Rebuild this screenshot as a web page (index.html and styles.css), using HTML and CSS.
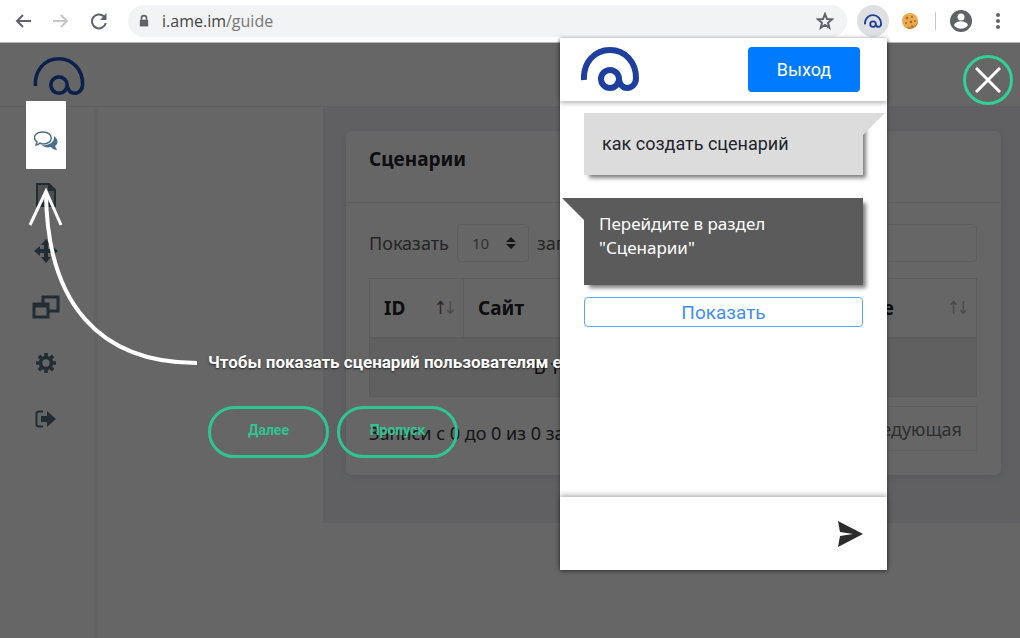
FILE: index.html
```html
<!DOCTYPE html>
<html lang="ru">
<head>
    <meta charset="UTF-8">
    <meta name="viewport" content="width=device-width, initial-scale=1.0">
    <title>Сценарии</title>
    <link rel="stylesheet" href="styles.css">
</head>
<body>

    <!-- Shared logo shape -->
    <svg class="defs" aria-hidden="true">
        <symbol id="logo" viewBox="0 0 58 44">
            <path d="M3 33C2 16 13 3 29 3c15 0 26 12 26 28 0 6-4 10-9 10s-7-4-8-8"/>
            <circle cx="29" cy="32" r="9"/>
        </symbol>
    </svg>

    <!-- Browser toolbar -->
    <div class="toolbar">
        <button class="tool" aria-label="Назад">
            <svg width="18" height="18" viewBox="0 0 18 18" fill="none" stroke="#5f6368" stroke-width="2"><path d="M17 9H3M9 3L3 9l6 6"/></svg>
        </button>
        <button class="tool" aria-label="Вперёд">
            <svg width="18" height="18" viewBox="0 0 18 18" fill="none" stroke="#c4c6c8" stroke-width="2"><path d="M1 9h14M9 3l6 6-6 6"/></svg>
        </button>
        <button class="tool" aria-label="Обновить">
            <svg width="18" height="18" viewBox="0 0 18 18" fill="none" stroke="#5f6368" stroke-width="2"><path d="M14 4.500A7 7 0 1 0 15.800 11"/><path d="M16.500 1v7H10z" fill="#5f6368" stroke="none"/></svg>
        </button>
        <div class="address">
            <svg width="10" height="14" viewBox="0 0 12 15"><path d="M1 6h10v8H1z" fill="#5f6368"/><path d="M3 6V4a3 3 0 0 1 6 0v2" fill="none" stroke="#5f6368" stroke-width="2"/></svg>
            <span class="url">i.ame.im<span class="path">/guide</span></span>
            <svg class="star" width="18" height="18" viewBox="0 0 18 18" fill="none" stroke="#5f6368" stroke-width="2"><path d="M9 2l2 5 5 .4-4 3.400 1.300 5L9 13l-4.300 2.800 1.300-5-4-3.400L7 7z"/></svg>
        </div>
        <button class="extension" aria-label="Ассистент">
            <svg class="logo" width="18" height="14"><use href="#logo"/></svg>
        </button>
        <button class="tool" aria-label="Cookie">
            <svg width="18" height="18" viewBox="0 0 18 18"><circle cx="9" cy="9" r="8" fill="#eba94e"/><path d="M4 15a8 8 0 0 0 13-6c-1 4-6 7-13 6z" fill="#c97f2c"/><g fill="#a8642a"><circle cx="6" cy="6" r="1.300"/><circle cx="11" cy="5" r="1"/><circle cx="5" cy="11" r="1"/><circle cx="10" cy="10" r="1.300"/><circle cx="14" cy="9" r="1"/><circle cx="11" cy="14" r="1"/></g></svg>
        </button>
        <span class="divider"></span>
        <button class="tool profile" aria-label="Профиль">
            <svg width="22" height="22" viewBox="0 0 22 22"><circle cx="11" cy="11" r="11" fill="#5f6368"/><circle cx="11" cy="7" r="3.500" fill="#fff"/><path d="M4 15c2-5 12-5 14 0-3 5-11 5-14 0z" fill="#fff"/></svg>
        </button>
        <button class="tool" aria-label="Меню">
            <svg width="4" height="18" viewBox="0 0 4 18" fill="#5f6368"><circle cx="2" cy="3" r="2"/><circle cx="2" cy="9" r="2"/><circle cx="2" cy="15" r="2"/></svg>
        </button>
    </div>

    <div class="page">
        <div class="header">
            <svg class="logo" width="54" height="40"><use href="#logo"/></svg>
        </div>

        <div class="main">
            <nav class="sidebar">
                <a href="#" class="active" aria-label="Сценарии">
                    <svg width="24" height="20" viewBox="0 0 24 20"><path d="M20 5c5 4 4 8 1 10l2 4c-3 0-5-2-6-3-4 1-7 0-9-2 7 1 13-3 12-9z" fill="#48708a"/><path d="M9 1c11 0 11 12 0 12-2 0-2 0-3-1-1 1-2 2-4 2l1-3C-2 7 1 1 9 1z" fill="#fff" stroke="#48708a" stroke-width="1.500"/></svg>
                </a>
                <a href="#" aria-label="Файлы">
                    <svg width="22" height="24" viewBox="0 0 22 24"><path d="M2 1h12l6 6v16H2z" fill="#c0c6ca" stroke="#557080" stroke-width="2"/><path d="M13 1v7h7M6 19h10v4H6z" fill="#557080"/></svg>
                </a>
                <a href="#" aria-label="Переместить">
                    <svg width="24" height="24" viewBox="0 0 24 24" fill="#557080"><path d="M12 0l5 6h-3v4h4V7l6 5-6 5v-3h-4v4h3l-5 6-5-6h3v-4H6v3l-6-5 6-5v3h4V6H7z"/></svg>
                </a>
                <a href="#" aria-label="Окна">
                    <svg width="28" height="24" viewBox="0 0 28 24" fill="none" stroke="#557080" stroke-width="3"><path d="M11 8V2h15v14h-9M2 9h14v13H2z"/><path d="M2 11h14"/></svg>
                </a>
                <a href="#" aria-label="Настройки">
                    <svg width="20" height="20" viewBox="0 0 22 22" fill="none" stroke="#557080"><circle cx="11" cy="11" r="6" stroke-width="4"/><path d="M11 0v4M11 18v4M0 11h4M18 11h4M3.200 3.200l3 3M15.800 15.800l3 3M3.200 18.800l3-3M15.800 6.200l3-3" stroke-width="4"/></svg>
                </a>
                <a href="#" aria-label="Выйти">
                    <svg width="22" height="18" viewBox="0 0 22 18"><path d="M8 1.500H4Q1.500 1.500 1.500 4v10Q1.500 16.500 4 16.500h4" fill="none" stroke="#557080" stroke-width="2"/><path d="M6 6h6V1l9 8-9 8v-5H6z" fill="#557080"/></svg>
                </a>
            </nav>

            <div class="content">
                <div class="card">
                    <h1>Сценарии</h1>
                    <div class="card-body">
                        <div class="row filters">
                            <label class="length">Показать
                                <span class="select">
                                    <select><option>10</option><option>25</option></select>
                                    <svg width="10" height="14" viewBox="0 0 10 14"><path d="M0 6l5-5 5 5zM0 8l5 5 5-5z" fill="#343a40"/></svg>
                                </span>
                                записей</label>
                            <label class="search">Поиск: <input type="search"></label>
                        </div>
                        <table>
                            <thead>
                                <tr>
                                    <th class="col-id"><span class="th">ID <span class="sort"><b>↑</b>↓</span></span></th>
                                    <th><span class="th">Сайт <span class="sort">↑↓</span></span></th>
                                    <th class="col-name"><span class="th">Название <span class="sort">↑↓</span></span></th>
                                </tr>
                            </thead>
                            <tbody>
                                <tr><td colspan="3">В таблице отсутствуют данные</td></tr>
                            </tbody>
                        </table>
                        <div class="row">
                            <span class="info">Записи с 0 до 0 из 0 записей</span>
                            <div class="pages">
                                <button>Предыдущая</button>
                                <button>Следующая</button>
                            </div>
                        </div>
                    </div>
                </div>
            </div>
        </div>

        <div class="overlay"></div>

        <!-- Guided tour -->
        <svg class="arrow" width="180" height="190" viewBox="0 0 180 190" fill="none" stroke="#fff" stroke-width="4">
            <path d="M177 178C78 178 27 117 26 8"/>
            <path d="M10 40L26 6l15 34" stroke-width="3"/>
        </svg>
        <div class="tour">
            <p>Чтобы показать сценарий пользователям е</p>
            <div class="tour-buttons">
                <button>Далее</button>
                <button>Пропуск</button>
            </div>
        </div>
        <button class="close" aria-label="Закрыть">
            <svg width="26" height="26" viewBox="0 0 26 26" stroke="#fff" stroke-width="3"><path d="M1 1l24 24M25 1L1 25"/></svg>
        </button>
    </div>

    <!-- Extension popup -->
    <div class="popup">
        <div class="popup-header">
            <svg class="logo" width="58" height="44"><use href="#logo"/></svg>
            <button class="logout">Выход</button>
        </div>
        <div class="chat">
            <div class="message user">как создать сценарий</div>
            <div class="message bot">Перейдите в раздел<br>"Сценарии"</div>
            <button class="show">Показать</button>
        </div>
        <div class="popup-footer">
            <input type="text" aria-label="Сообщение">
            <button aria-label="Отправить">
                <svg width="26" height="26" viewBox="0 0 26 26"><path d="M1 0l25 13L1 26l2-11 13-2-13-2z" fill="#2b2b2b"/></svg>
            </button>
        </div>
    </div>

</body>
</html>
```

FILE: styles.css
```css
/* Basic reset */
* {
    margin: 0;
    padding: 0;
    box-sizing: border-box;
}

body {
    display: flex;
    flex-direction: column;
    position: relative;
    min-height: 100vh;
    background: #fff;
    color: #212529;
    font-family: "Noto Sans", sans-serif;
    font-size: 18px;
}

button {
    background: none;
    border: none;
    font-family: inherit;
    cursor: pointer;
}

svg {
    display: block;
    flex-shrink: 0;
}

.defs {
    position: absolute;
    width: 0;
    height: 0;
}

.logo {
    fill: none;
    stroke: #1f3f9e;
    stroke-width: 6px;
}

/* Browser toolbar */
.toolbar {
    display: flex;
    align-items: center;
    height: 43px;
    padding: 0 20px 0 14px;
    border-bottom: 1px solid #b5b5b5;
}

.tool {
    margin-right: 20px;
}

.tool:last-child {
    margin-right: 0;
}

.address {
    display: flex;
    flex: 1;
    align-items: center;
    gap: 13px;
    height: 32px;
    padding: 0 13px 0 11px;
    margin-right: 10px;
    border-radius: 16px;
    background: #f1f3f4;
    font-family: "Open Sans", sans-serif;
    font-size: 16px;
    color: #444;
}

.path {
    color: #777;
}

.star {
    margin-left: auto;
}

.extension {
    display: flex;
    align-items: center;
    justify-content: center;
    width: 32px;
    height: 32px;
    margin-right: 12px;
    border-radius: 50%;
    background: #dfe0e1;
}

.divider {
    width: 1px;
    height: 18px;
    margin-right: 14px;
    margin-left: -4px;
    background: #c8c8c8;
}

.profile {
    margin-right: 24px;
}

/* Page */
.page {
    display: flex;
    flex: 1;
    flex-direction: column;
    position: relative;
}

.header {
    height: 64px;
    padding: 13px 32px;
    border-bottom: 1px solid #ebebeb;
}

.header .logo {
    stroke: #1d52b8;
    stroke-width: 4px;
}

.main {
    display: flex;
    flex: 1;
}

.sidebar {
    display: flex;
    flex-direction: column;
    align-items: center;
    width: 98px;
    padding-right: 2px;
    border-right: 4px solid #f8f8f8;
}

.sidebar a {
    display: flex;
    align-items: center;
    justify-content: center;
    width: 40px;
    height: 56px;
}

.sidebar .active {
    position: relative;
    z-index: 2;
    height: 68px;
    padding-top: 12px;
    margin-top: -6px;
    margin-bottom: -2px;
    background: #fff;
}

.content {
    flex: 1;
    align-self: flex-start;
    margin-left: 225px;
    padding: 24px 19px 48px 23px;
    background: #eff0f5;
}

.card {
    border-radius: 6px;
    background: #fff;
    box-shadow: 0 2px 8px rgba(0, 0, 0, 0.08);
}

.card h1 {
    height: 72px;
    padding: 16px 23px;
    border-bottom: 1px solid #e9e9e9;
    font-size: 19px;
    line-height: 24px;
}

.card-body {
    padding: 21px 24px 24px 23px;
    color: #5a5e62;
}

.row {
    display: flex;
    align-items: center;
    justify-content: space-between;
}

.filters {
    margin-bottom: 16px;
}

.length,
.search {
    display: flex;
    align-items: center;
    gap: 8px;
    line-height: 24px;
}

.select {
    position: relative;
}

.select select {
    width: 72px;
    height: 38px;
    padding: 0 14px;
    appearance: none;
    border: 1px solid #e9e9e9;
    border-radius: 4px;
    background: #fff;
    color: #777b80;
    font-family: inherit;
    font-size: 15px;
}

.select svg {
    position: absolute;
    top: 12px;
    right: 13px;
    pointer-events: none;
}

.search input {
    width: 170px;
    height: 38px;
    border: 1px solid #e9e9e9;
    border-radius: 4px;
    background: #fff;
}

table {
    width: 100%;
    margin-bottom: 9px;
    border-collapse: collapse;
    color: #212529;
    font-size: 19px;
}

th,
td {
    height: 59px;
    padding: 0 10px 0 14px;
    border: 1px solid #e6e6e6;
}

th {
    border-bottom-width: 2px;
}

.th {
    display: flex;
    align-items: center;
    justify-content: space-between;
}

.col-id {
    width: 94px;
}

.col-name {
    width: 192px;
}

.sort {
    color: #bbb;
    font-family: "DejaVu Sans Condensed", sans-serif;
    font-size: 18px;
    font-weight: normal;
    letter-spacing: -4px;
}

.sort b {
    color: #666;
    font-weight: normal;
}

td {
    background: #f0f0f0;
    text-align: center;
}

.info {
    padding-top: 8px;
    color: #33373b;
}

.pages {
    display: flex;
}

.pages button {
    height: 45px;
    padding: 0 14px;
    border: 1px solid #f0f0f0;
    color: #6c757d;
    font-size: 18px;
}

.overlay {
    position: absolute;
    z-index: 1;
    top: 0;
    left: 0;
    width: 100%;
    height: 100%;
    background: rgba(0, 0, 0, 0.6);
}

/* Guided tour */
.arrow {
    position: absolute;
    z-index: 3;
    top: 142px;
    left: 20px;
}

.tour {
    position: absolute;
    z-index: 3;
    top: 307px;
    left: 208px;
    color: #fff;
    font-family: Roboto, sans-serif;
    font-weight: bold;
}

.tour p {
    margin-bottom: 32px;
    font-size: 17px;
    line-height: 24px;
    text-shadow: 0 1px 2px #222;
    white-space: nowrap;
}

.tour-buttons {
    display: flex;
    gap: 8px;
}

.tour button {
    width: 121px;
    height: 52px;
    padding-bottom: 4px;
    border: 3px solid #30c493;
    border-radius: 26px;
    color: #30c493;
    font-size: 14px;
    font-weight: bold;
}

.close {
    display: flex;
    align-items: center;
    justify-content: center;
    position: absolute;
    z-index: 3;
    top: 12px;
    right: 7px;
    width: 50px;
    height: 50px;
    border: 3px solid #30d098;
    border-radius: 50%;
}

/* Extension popup */
.popup {
    display: flex;
    flex-direction: column;
    position: absolute;
    z-index: 4;
    top: 38px;
    right: 133px;
    width: 327px;
    height: 532px;
    background: #fff;
    box-shadow: 0 1px 4px rgba(0, 0, 0, 0.5);
    font-family: Roboto, sans-serif;
    font-size: 18px;
}

.popup-header {
    display: flex;
    justify-content: space-between;
    height: 63px;
    padding: 9px 27px 9px 21px;
    box-shadow: 0 2px 5px rgba(0, 0, 0, 0.3);
}

.logout {
    width: 112px;
    height: 45px;
    border-radius: 4px;
    background: #007bff;
    color: #fff;
    font-size: 18px;
}

.chat {
    flex: 1;
    padding: 12px 24px;
}

.message {
    position: relative;
    margin-bottom: 23px;
    box-shadow: 4px 4px 4px -1px rgba(0, 0, 0, 0.5);
}

.message::after {
    content: "";
    position: absolute;
    top: 0;
    width: 22px;
    height: 22px;
}

.user {
    padding: 19px 18px;
    background: #dcdcdc;
    line-height: 24px;
}

.user::after {
    left: 100%;
    background: #dcdcdc;
    clip-path: polygon(0 0, 100% 0, 0 100%);
}

.bot {
    min-height: 87px;
    padding: 14px 15px;
    margin-bottom: 12px;
    background: #5b5b5b;
    color: #fff;
    font-family: "Noto Sans", sans-serif;
    font-size: 17px;
    line-height: 24px;
}

.bot::after {
    right: 100%;
    background: #5b5b5b;
    clip-path: polygon(0 0, 100% 0, 100% 100%);
}

.show {
    width: 100%;
    height: 30px;
    border: 1px solid #5aa7ff;
    border-radius: 4px;
    color: #3f8ef5;
    font-size: 19px;
}

.popup-footer {
    display: flex;
    align-items: center;
    height: 73px;
    padding: 0 24px;
    box-shadow: 0 -2px 5px rgba(0, 0, 0, 0.3);
}

.popup-footer input {
    flex: 1;
    height: 40px;
    border: none;
    outline: none;
    font-family: inherit;
    font-size: 18px;
}
```
